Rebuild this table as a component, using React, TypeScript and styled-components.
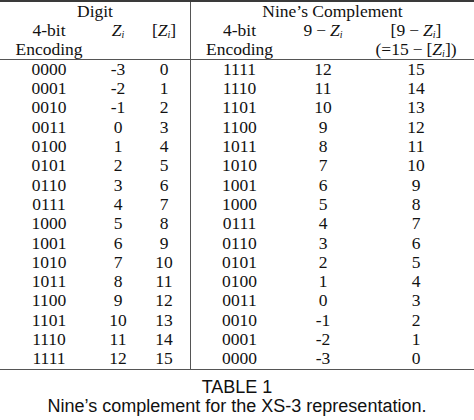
import React from "react";
import styled, { createGlobalStyle } from "styled-components";

const rows: [string, string, string, string, string, string][] = [
  ["0000", "-3", "0", "1111", "12", "15"],
  ["0001", "-2", "1", "1110", "11", "14"],
  ["0010", "-1", "2", "1101", "10", "13"],
  ["0011", "0", "3", "1100", "9", "12"],
  ["0100", "1", "4", "1011", "8", "11"],
  ["0101", "2", "5", "1010", "7", "10"],
  ["0110", "3", "6", "1001", "6", "9"],
  ["0111", "4", "7", "1000", "5", "8"],
  ["1000", "5", "8", "0111", "4", "7"],
  ["1001", "6", "9", "0110", "3", "6"],
  ["1010", "7", "10", "0101", "2", "5"],
  ["1011", "8", "11", "0100", "1", "4"],
  ["1100", "9", "12", "0011", "0", "3"],
  ["1101", "10", "13", "0010", "-1", "2"],
  ["1110", "11", "14", "0001", "-2", "1"],
  ["1111", "12", "15", "0000", "-3", "0"],
];

const Zi = () => (
  <Var>
    Z<sub>i</sub>
  </Var>
);

const App = () => {
  return (
    <Page>
      <GlobalStyle />
      <Table>
        <Head>
          <Cell $span={3}>Digit</Cell>
          <Cell $span={3} $split>
            Nine’s Complement
          </Cell>
          <Cell>4-bit</Cell>
          <Cell>
            <Zi />
          </Cell>
          <Cell>
            [<Zi />]
          </Cell>
          <Cell $split>4-bit</Cell>
          <Cell>
            9<Op>−</Op>
            <Zi />
          </Cell>
          <Cell>
            [9<Op>−</Op>
            <Zi />]
          </Cell>
          <Cell>Encoding</Cell>
          <Cell />
          <Cell />
          <Cell $split>Encoding</Cell>
          <Cell />
          <Cell>
            (=15<Op>−</Op>[<Zi />])
          </Cell>
        </Head>
        <Body>
          {rows.map((r) =>
            r.map((v, i) => (
              <Cell key={r[0] + i} $split={i === 3}>
                {v}
              </Cell>
            ))
          )}
        </Body>
      </Table>
      <Caption>
        <CaptionTitle>TABLE 1</CaptionTitle>
        <CaptionText>Nine’s complement for the XS-3 representation.</CaptionText>
      </Caption>
    </Page>
  );
};

export default App;

const GlobalStyle = createGlobalStyle`
  body {
    margin: 0;
    background: #fff;
  }
`;

const Page = styled.div`
  width: 474px;
  height: 420px;
  overflow: hidden;
  background: #fff;
  color: #111;
`;

const Table = styled.div`
  border-top: 2px solid #3a3a3a;
  border-bottom: 1.5px solid #555;
  font-family: "Liberation Serif", "Times New Roman", serif;
  font-size: 17.5px;
`;

const Grid = styled.div`
  display: grid;
  grid-template-columns: 98px 40px 52px 98px 70px 116px;
`;

const Head = styled(Grid)`
  grid-auto-rows: 19px;
  border-bottom: 1.5px solid #555;
`;

const Body = styled(Grid)`
  grid-auto-rows: 19.3px;
`;

const Cell = styled.div<{ $span?: number; $split?: boolean }>`
  grid-column: span ${(p) => p.$span ?? 1};
  box-sizing: border-box;
  border-left: ${(p) => (p.$split ? "1.5px solid #555" : "none")};
  display: flex;
  align-items: center;
  justify-content: center;
  white-space: nowrap;
  line-height: 1;
`;

const Op = styled.span`
  margin: 0 4px;
`;

const Var = styled.span`
  font-style: italic;

  sub {
    font-size: 10px;
    vertical-align: -2px;
    line-height: 0;
  }
`;

const Caption = styled.div`
  padding-top: 8px;
  font-family: "Liberation Sans", Arial, sans-serif;
  font-size: 18px;
  line-height: 19px;
  text-align: center;
  color: #111;
`;

const CaptionTitle = styled.div``;

const CaptionText = styled.div``;
